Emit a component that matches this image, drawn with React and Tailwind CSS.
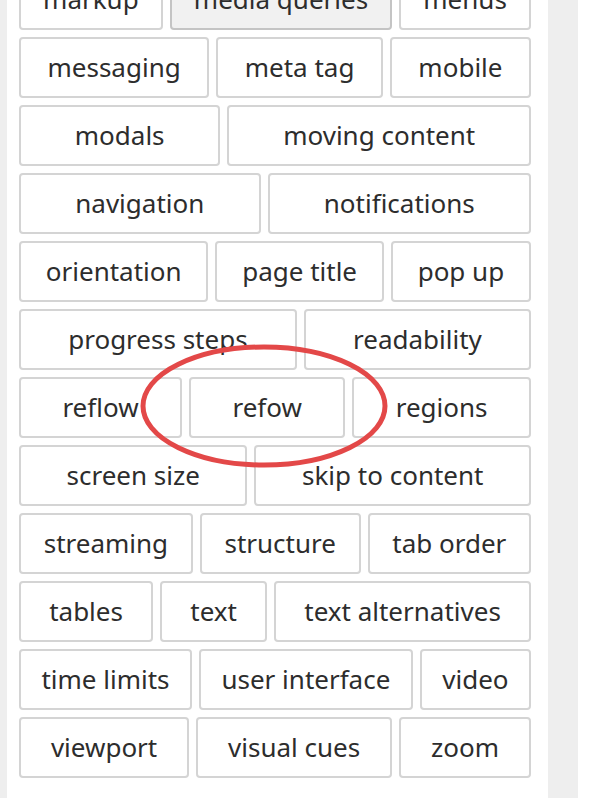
import React from "react";

const rows = [
  ["markup", "media queries", "menus"],
  ["messaging", "meta tag", "mobile"],
  ["modals", "moving content"],
  ["navigation", "notifications"],
  ["orientation", "page title", "pop up"],
  ["progress steps", "readability"],
  ["reflow", "refow", "regions"],
  ["screen size", "skip to content"],
  ["streaming", "structure", "tab order"],
  ["tables", "text", "text alternatives"],
  ["time limits", "user interface", "video"],
  ["viewport", "visual cues", "zoom"],
];

const activeTag = "media queries";

function Tag({ label }) {
  const active = label === activeTag;
  return (
    <button
      type="button"
      className={`flex h-[61px] grow items-center justify-center rounded-[4px] border-2 px-5 text-[26px] text-[#2d2d2d] ${
        active ? "border-[#c4c4c4] bg-[#f1f1f1]" : "border-[#d4d4d4] bg-white"
      }`}
    >
      {label}
    </button>
  );
}

export default function App() {
  return (
    <div
      className="flex h-[798px] w-full overflow-hidden bg-white"
      style={{ fontFamily: '"Noto Sans", "Open Sans", sans-serif' }}
    >
      <div className="w-[7px] shrink-0 bg-[#eeeeee]" />
      <div className="relative w-[541px] shrink-0 bg-white pl-[12px]">
        <div className="mt-[-31px] flex w-[512px] flex-col gap-[7px]">
          {rows.map((row, i) => (
            <div key={i} className="flex gap-[7px]">
              {row.map((label) => (
                <Tag key={label} label={label} />
              ))}
            </div>
          ))}
        </div>
        <svg
          className="pointer-events-none absolute left-0 top-0"
          width="541"
          height="798"
        >
          <ellipse
            cx="257"
            cy="406"
            rx="121"
            ry="59"
            fill="none"
            stroke="#e34848"
            strokeWidth="5"
          />
        </svg>
      </div>
      <div className="w-[30px] shrink-0 bg-[#eeeeee]" />
      <div className="grow bg-white" />
    </div>
  );
}
